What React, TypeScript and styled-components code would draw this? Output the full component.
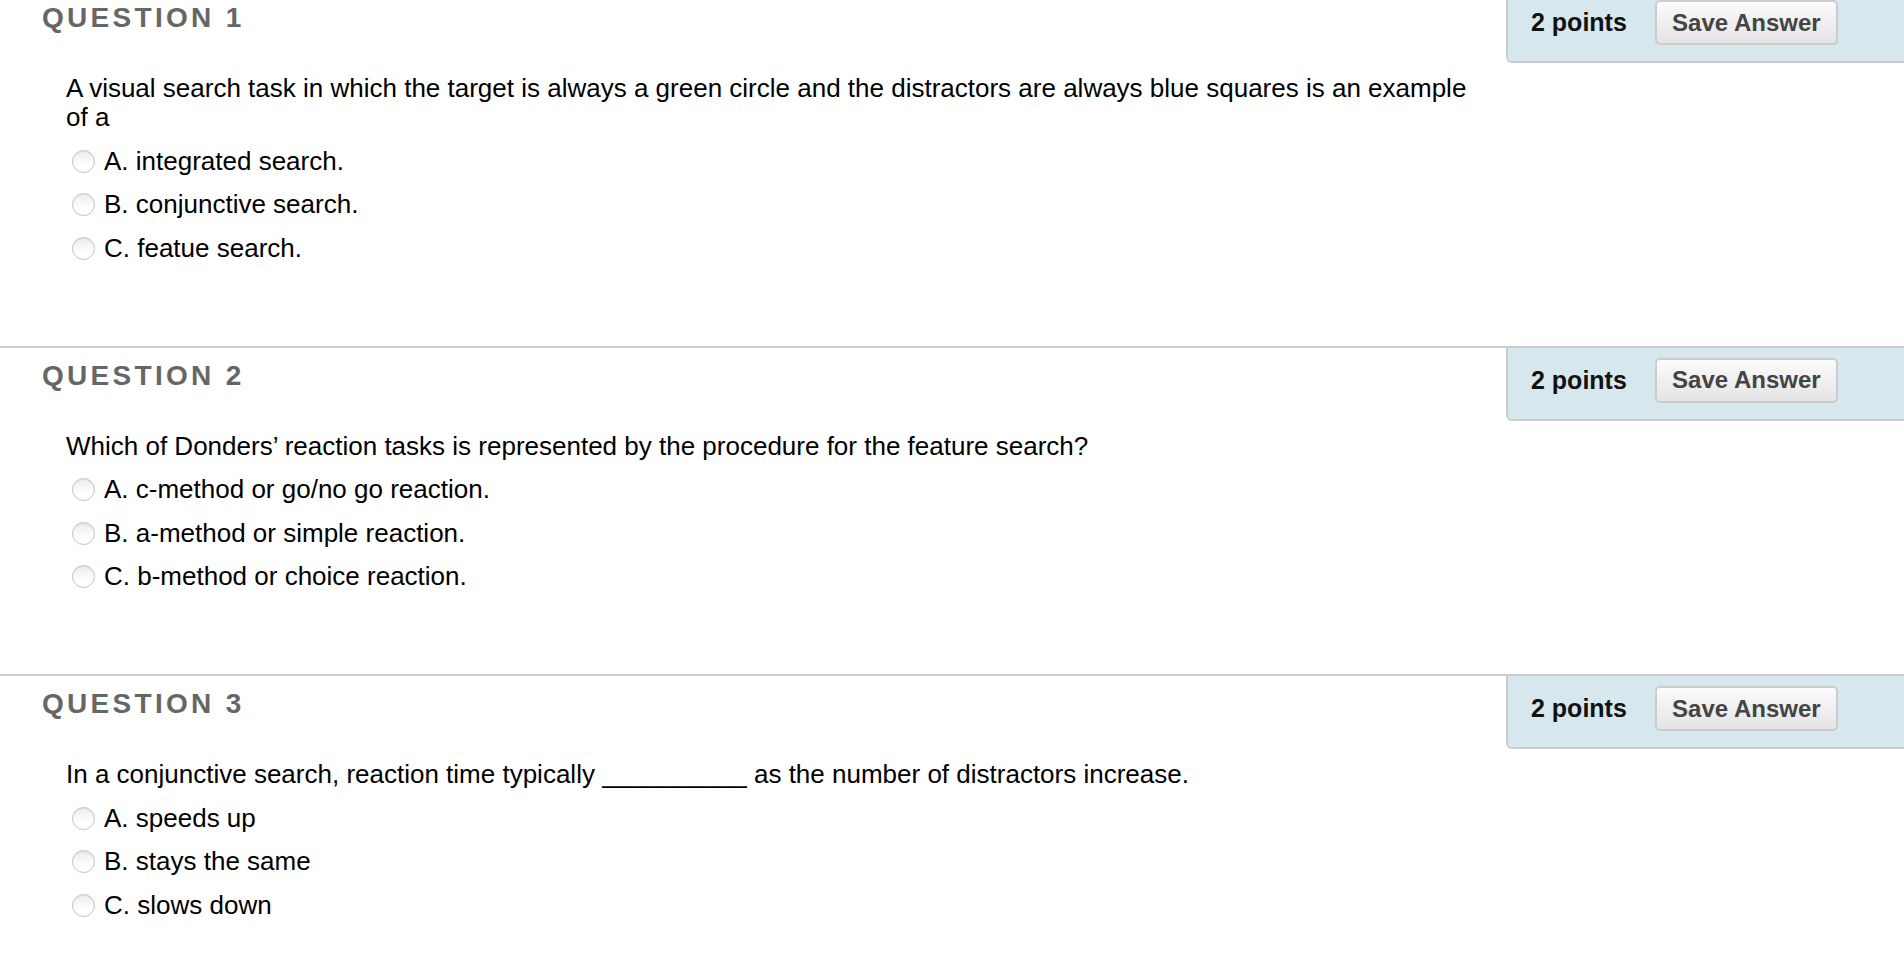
import React from "react";
import styled, { createGlobalStyle } from "styled-components";

const GlobalStyle = createGlobalStyle`
  html, body {
    margin: 0;
    padding: 0;
    background: #ffffff;
    overflow: hidden;
  }
  body {
    font-family: "Liberation Sans", Arial, Helvetica, sans-serif;
    color: #111111;
  }
`;

interface Question {
  number: number;
  points: number;
  text: React.ReactNode;
  options: string[];
}

const questions: Question[] = [
  {
    number: 1,
    points: 2,
    text: (
      <>
        A visual search task in which the target is always a green circle and
        the distractors are always blue squares is an example of a
      </>
    ),
    options: ["A. integrated search.", "B. conjunctive search.", "C. featue search."],
  },
  {
    number: 2,
    points: 2,
    text: (
      <>
        Which of Donders’ reaction tasks is represented by the procedure for the
        feature search?
      </>
    ),
    options: [
      "A. c-method or go/no go reaction.",
      "B. a-method or simple reaction.",
      "C. b-method or choice reaction.",
    ],
  },
  {
    number: 3,
    points: 2,
    text: (
      <>
        In a conjunctive search, reaction time typically __________ as the
        number of distractors increase.
      </>
    ),
    options: ["A. speeds up", "B. stays the same", "C. slows down"],
  },
];

const App = () => {
  return (
    <>
      <GlobalStyle />
      <Page>
        {questions.map((q) => (
          <Section key={q.number}>
            <HeaderRow>
              <Title>QUESTION {q.number}</Title>
              <PointsPanel>
                <Points>{q.points} points</Points>
                <SaveButton type="button">Save Answer</SaveButton>
              </PointsPanel>
            </HeaderRow>
            <Body>
              <QuestionText>{q.text}</QuestionText>
              <OptionList>
                {q.options.map((opt) => (
                  <Option key={opt}>
                    <Radio type="radio" name={`q${q.number}`} />
                    <span>{opt}</span>
                  </Option>
                ))}
              </OptionList>
            </Body>
          </Section>
        ))}
      </Page>
    </>
  );
};

export default App;

const Page = styled.div`
  margin-top: -12px;
`;

const Section = styled.section`
  border-top: 2px solid #cccccc;
  padding-bottom: 83px;
`;

const HeaderRow = styled.div`
  display: flex;
  align-items: flex-start;
  justify-content: space-between;
`;

const Title = styled.h2`
  margin: 12px 0 0 42px;
  font-size: 28px;
  line-height: 32px;
  font-weight: bold;
  letter-spacing: 3.3px;
  color: #666666;
`;

const PointsPanel = styled.div`
  box-sizing: border-box;
  width: 398px;
  height: 73px;
  display: flex;
  align-items: center;
  gap: 28px;
  padding: 0 0 6px 23px;
  background: #d6e8ee;
  border-left: 2px solid #cccccc;
  border-bottom: 2px solid #cccccc;
  border-bottom-left-radius: 6px;
`;

const Points = styled.span`
  font-size: 25px;
  font-weight: bold;
  color: #111111;
`;

const SaveButton = styled.button`
  box-sizing: border-box;
  width: 183px;
  height: 45px;
  padding: 0;
  font-family: inherit;
  font-size: 24px;
  font-weight: bold;
  color: #444444;
  background: linear-gradient(#fbfbfb, #e4e4e4);
  border: 2px solid #cccccc;
  border-radius: 5px;
`;

const Body = styled.div`
  margin: 11px 0 0 66px;
  max-width: 1420px;
`;

const QuestionText = styled.p`
  margin: 0;
  font-size: 26px;
  line-height: 29px;
  color: #000000;
`;

const OptionList = styled.div`
  display: flex;
  flex-direction: column;
`;

const Option = styled.label`
  display: flex;
  align-items: center;
  gap: 9px;
  margin-top: 14.5px;
  padding-left: 6px;
  font-size: 26px;
  line-height: 29px;
  color: #000000;
`;

const Radio = styled.input`
  appearance: none;
  box-sizing: border-box;
  width: 23px;
  height: 23px;
  margin: 0;
  border-radius: 50%;
  border: 1px solid #c4c4c4;
  background: linear-gradient(#ececec, #ffffff 70%);
  box-shadow: inset 0 1px 1px rgba(0, 0, 0, 0.06);
`;
